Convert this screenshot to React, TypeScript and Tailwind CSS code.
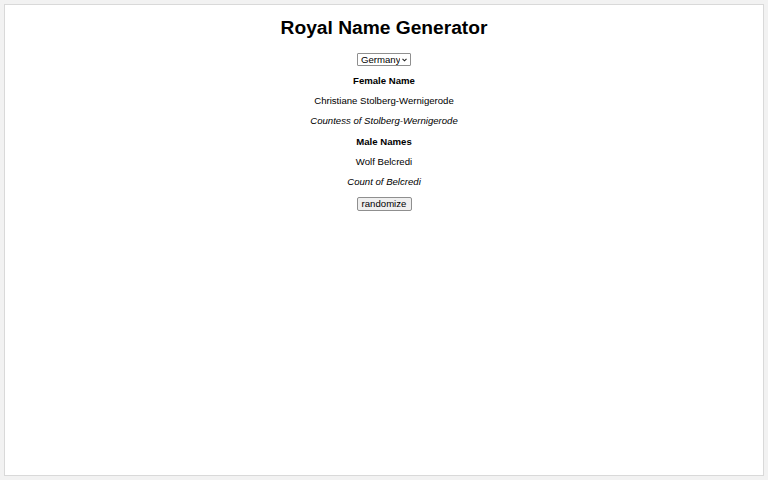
import React, { useState } from "react";

const royals = {
  Germany: {
    female: "Christiane Stolberg-Wernigerode",
    femaleTitle: "Countess of Stolberg-Wernigerode",
    male: "Wolf Belcredi",
    maleTitle: "Count of Belcredi",
  },
};

export default function App() {
  const [country, setCountry] = useState("Germany");
  const r = royals.Germany;
  return (
    <div
      className="h-[480px] bg-[#f2f2f2] p-[4px]"
      style={{ fontFamily: '"Liberation Sans", Arial, sans-serif' }}
    >
      <div className="h-full border border-[#d9d9d9] bg-white text-center text-black">
        <h1 className="mt-[12px] text-[19.2px] font-bold leading-[22px]">
          Royal Name Generator
        </h1>
        <div className="mt-[14px] flex justify-center">
          <div className="relative">
            <select
              value={country}
              onChange={(e) => setCountry(e.target.value)}
              className="block h-[13px] w-[54px] appearance-none rounded-[1px] border border-[#8f8f8f] bg-white pl-[3px] pr-[10px] text-left text-[9.6px] leading-[11px] text-black"
            >
              <option>Germany</option>
              <option>France</option>
              <option>Spain</option>
            </select>
            <svg
              className="pointer-events-none absolute right-[4px] top-[5px]"
              width="5"
              height="4"
              viewBox="0 0 5 4"
            >
              <path d="M0.5 0.8 L2.5 2.8 L4.5 0.8" fill="none" stroke="#222" strokeWidth="1.1" />
            </svg>
          </div>
        </div>
        <p className="mt-[8.5px] text-[9.6px] font-bold leading-[11px]">Female Name</p>
        <p className="mt-[9.4px] text-[9.6px] leading-[11px]">{r.female}</p>
        <p className="mt-[9.4px] text-[9.6px] italic leading-[11px]">{r.femaleTitle}</p>
        <p className="mt-[9.4px] text-[9.6px] font-bold leading-[11px]">Male Names</p>
        <p className="mt-[9.4px] text-[9.6px] leading-[11px]">{r.male}</p>
        <p className="mt-[9.4px] text-[9.6px] italic leading-[11px]">{r.maleTitle}</p>
        <div className="mt-[9.5px] flex justify-center">
          <button className="h-[14px] w-[55px] rounded-[2px] border border-[#8f8f8f] bg-[#efefef] px-0 text-[9.6px] leading-[11px] text-black">
            randomize
          </button>
        </div>
      </div>
    </div>
  );
}
